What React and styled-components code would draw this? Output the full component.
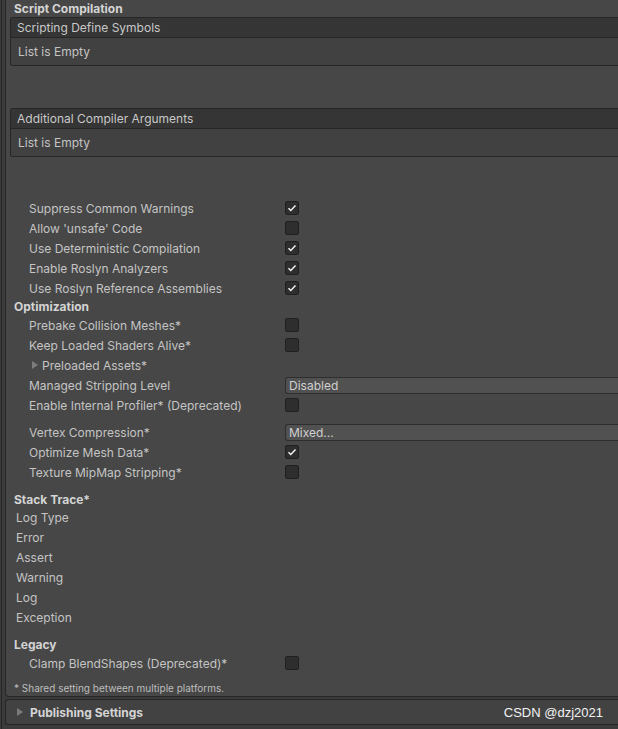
import React from "react";
import styled, { createGlobalStyle } from "styled-components";

const GlobalStyle = createGlobalStyle`
    html, body {
        margin: 0;
        padding: 0;
        background: #3b3b3b;
    }
    body {
        font-family: Inter, "Noto Sans", "Liberation Sans", sans-serif;
        font-size: 12px;
        color: #c4c4c4;
    }
`;

const Window = styled.div`
    width: 618px;
    height: 729px;
    overflow: hidden;
    box-sizing: border-box;
    padding-left: 1px;
`;

const Gutter = styled.div`
    height: 100%;
    border-left: 1px solid #262626;
    padding-left: 3px;
    box-sizing: border-box;
`;

const Panel = styled.div`
    background: #474747;
    border: 1px solid #262626;
    border-top: none;
    border-right: none;
    border-bottom-left-radius: 4px;
    height: 697px;
    box-sizing: border-box;
    display: flex;
    flex-direction: column;
`;

const SectionTitle = styled.div`
    font-weight: 700;
    color: #d4d4d4;
    height: ${p => p.$h || 17}px;
    line-height: ${p => p.$h || 17}px;
    padding-left: 8px;
    margin-top: ${p => p.$top || 0}px;
`;

const ListBox = styled.div`
    margin-left: 4px;
    margin-bottom: ${p => p.$bottom}px;
    border: 1px solid #262626;
    border-right: none;
    border-radius: 3px 0 0 3px;
    overflow: hidden;
`;

const ListHeader = styled.div`
    background: #353535;
    height: 19px;
    line-height: 19px;
    padding-left: 6px;
    border-bottom: 1px solid #262626;
    color: #c8c8c8;
`;

const ListBody = styled.div`
    background: #414141;
    height: 27px;
    line-height: 27px;
    padding-left: 7px;
`;

const Row = styled.div`
    display: grid;
    grid-template-columns: 279px 1fr;
    align-items: center;
    height: ${p => p.$h || 20}px;
    margin-top: ${p => p.$top || 0}px;
`;

const Label = styled.div`
    padding-left: ${p => p.$indent ?? 23}px;
    display: flex;
    align-items: center;
    gap: 4px;
    white-space: nowrap;
`;

const Foldout = styled.span`
    width: 0;
    height: 0;
    border-top: 4.5px solid transparent;
    border-bottom: 4.5px solid transparent;
    border-left: 6px solid #7c7c7c;
    margin-left: ${p => p.$left || 0}px;
`;

const Box = styled.span`
    width: 12px;
    height: 12px;
    background: #2e2e2e;
    border: 1px solid #202020;
    border-radius: 2px;
    display: flex;
    align-items: center;
    justify-content: center;
`;

const Dropdown = styled.div`
    height: 15px;
    line-height: 15px;
    background: #515151;
    border: 1px solid #2e2e2e;
    border-right: none;
    border-radius: 3px 0 0 3px;
    padding-left: 3px;
    color: #d0d0d0;
`;

const Note = styled.div`
    font-size: 10px;
    padding-left: 8px;
    margin-top: 9px;
    color: #bdbdbd;
`;

const PublishBar = styled.div`
    margin-top: 2px;
    height: 26px;
    border: 1px solid #262626;
    border-right: none;
    border-radius: 3px 0 0 3px;
    background: #424242;
    display: flex;
    align-items: center;
    padding: 0 15px 0 11px;
    gap: 7px;
    box-sizing: border-box;
`;

const BarTitle = styled.span`
    font-weight: 700;
    color: #d4d4d4;
    flex: 1;
`;

const Watermark = styled.span`
    font-family: "Liberation Sans", Arial, sans-serif;
    font-size: 13px;
    color: #f2f2f2;
`;

function Check({ on }) {
    return (
        <Box>
            {on && (
                <svg width="10" height="10" viewBox="0 0 10 10">
                    <polyline points="1.5,5.2 3.8,7.5 8.5,2.5" fill="none" stroke="#f0f0f0" strokeWidth="1.5" />
                </svg>
            )}
        </Box>
    );
}

function Field({ label, value, h, top, indent }) {
    return (
        <Row $h={h} $top={top}>
            <Label $indent={indent}>{label}</Label>
            {value === undefined ? <span /> : typeof value === "string" ? <Dropdown>{value}</Dropdown> : <Check on={value} />}
        </Row>
    );
}

const compilerFlags = [
    ["Suppress Common Warnings", true],
    ["Allow 'unsafe' Code", false],
    ["Use Deterministic Compilation", true],
    ["Enable Roslyn Analyzers", true],
    ["Use Roslyn Reference Assemblies", true],
];

const logTypes = ["Error", "Assert", "Warning", "Log", "Exception"];

export default function App() {
    return (
        <>
            <GlobalStyle />
            <Window>
                <Gutter>
                    <Panel>
                        <SectionTitle>Script Compilation</SectionTitle>
                        <ListBox $bottom={42}>
                            <ListHeader>Scripting Define Symbols</ListHeader>
                            <ListBody>List is Empty</ListBody>
                        </ListBox>
                        <ListBox $bottom={41}>
                            <ListHeader>Additional Compiler Arguments</ListHeader>
                            <ListBody>List is Empty</ListBody>
                        </ListBox>

                        {compilerFlags.map(([label, on]) => (
                            <Field key={label} label={label} value={on} />
                        ))}

                        <SectionTitle>Optimization</SectionTitle>
                        <Field label="Prebake Collision Meshes*" value={false} />
                        <Field label="Keep Loaded Shaders Alive*" value={false} />
                        <Row>
                            <Label><Foldout $left={3} />Preloaded Assets*</Label>
                        </Row>
                        <Field label="Managed Stripping Level" value="Disabled" />
                        <Field label="Enable Internal Profiler* (Deprecated)" value={false} />
                        <Field label="Vertex Compression*" value="Mixed..." top={7} />
                        <Field label="Optimize Mesh Data*" value={true} />
                        <Field label="Texture MipMap Stripping*" value={false} />

                        <SectionTitle $top={9}>Stack Trace*</SectionTitle>
                        <Field label="Log Type" indent={10} h={19} />
                        {logTypes.map(t => (
                            <Field key={t} label={t} indent={10} />
                        ))}

                        <SectionTitle $top={9}>Legacy</SectionTitle>
                        <Field label="Clamp BlendShapes (Deprecated)*" value={false} />
                        <Note>* Shared setting between multiple platforms.</Note>
                    </Panel>
                    <PublishBar>
                        <Foldout />
                        <BarTitle>Publishing Settings</BarTitle>
                        <Watermark>CSDN @dzj2021</Watermark>
                    </PublishBar>
                </Gutter>
            </Window>
        </>
    );
}
